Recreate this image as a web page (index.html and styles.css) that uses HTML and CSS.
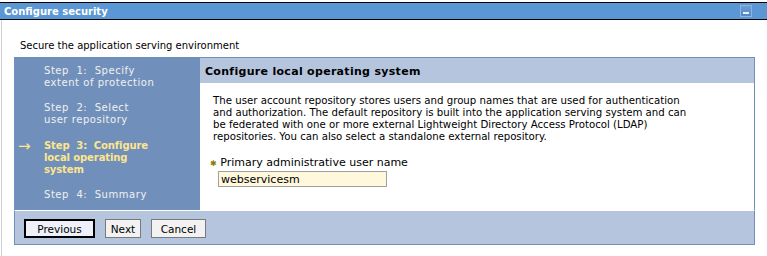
FILE: index.html
```html
<!DOCTYPE html>
<html lang="en">
    <head>
        <meta charset="UTF-8" />
        <title>Configure security</title>
        <link rel="stylesheet" href="styles.css">
    </head>
    <body>
        <!-- Portlet title bar -->
        <div class="titlebar">
            <span class="title">Configure security</span>
            <span class="minimize"><span class="dash"></span></span>
        </div>

        <div class="portlet">
            <p class="subtitle">Secure the application serving environment</p>

            <!-- Wizard -->
            <div class="wizard">
                <div class="wizard-main">
                    <div class="steps">
                        <div class="step">Step&nbsp; 1:&nbsp; Specify<br>extent of protection</div>
                        <div class="step">Step&nbsp; 2:&nbsp; Select<br>user repository</div>
                        <div class="step current">
                            <span class="arrow">&rarr;</span>
                            Step&nbsp; 3:&nbsp; Configure<br>local operating<br>system
                        </div>
                        <div class="step">Step&nbsp; 4:&nbsp; Summary</div>
                    </div>

                    <div class="panel">
                        <div class="panel-head">Configure local operating system</div>
                        <div class="panel-body">
                            <p>
                                The user account repository stores users and group names that are used for authentication<br>
                                and authorization. The default repository is built into the application serving system and can<br>
                                be federated with one or more external Lightweight Directory Access Protocol (LDAP)<br>
                                repositories. You can also select a standalone external repository.
                            </p>
                            <label class="field-label" for="adminUser">
                                <span class="req">&#10033;</span> Primary administrative user name
                            </label>
                            <input id="adminUser" class="field" type="text" value="webservicesm">
                        </div>
                    </div>
                </div>

                <div class="buttons">
                    <button class="default btn-prev">Previous</button>
                    <button class="btn-next">Next</button>
                    <button class="btn-cancel">Cancel</button>
                </div>
            </div>
        </div>
    </body>
</html>
```

FILE: styles.css
```css
html {
    background-color: #ffffff;
}

body {
    margin: 0;
    padding-top: 2px;
    font-family: "DejaVu Sans", Verdana, sans-serif;
    font-size: 10px;
    color: #000000;
}

.titlebar {
    display: flex;
    align-items: center;
    justify-content: space-between;
    height: 16px;
    padding: 0 4px;
    background-color: #5b97d4;
    border-top: 1px solid #000000;
    border-bottom: 1px solid #000000;
}

.title {
    color: #ffffff;
    font-weight: bold;
    font-size: 10px;
}

.minimize {
    display: flex;
    align-items: flex-end;
    justify-content: center;
    width: 12px;
    height: 12px;
    margin-right: 11px;
    background: linear-gradient(#6e9fd6, #4f86c4);
    box-shadow: inset 0 0 0 1px #8fb4de;
}

.dash {
    width: 6px;
    height: 2px;
    margin-bottom: 3px;
    background-color: #e8f0fa;
}

.portlet {
    border-left: 1px solid #d0d0d0;
    margin-left: 1px;
    padding: 20px 12px 12px 12px;
}

.subtitle {
    margin: 0 0 6px 6px;
}

.wizard {
    width: 741px;
}

.wizard-main {
    display: flex;
}

.steps {
    width: 186px;
    flex-shrink: 0;
    padding: 8px 0 9px 0;
    background-color: #7090bb;
    color: #f0f0f0;
}

.step {
    position: relative;
    padding-left: 30px;
    line-height: 12px;
    margin-bottom: 13px;
    letter-spacing: 0.55px;
}

.step:last-child {
    margin-bottom: 0;
}

.step.current {
    margin-top: 14px;
    color: #ffe58c;
    font-weight: bold;
    letter-spacing: -0.1px;
}

.arrow {
    position: absolute;
    left: 4px;
    top: 0;
    font-size: 15px;
    font-weight: normal;
}

.panel {
    flex: 1;
    border-top: 1px solid #7090bb;
    border-right: 1px solid #7090bb;
}

.panel-head {
    height: 23px;
    padding-top: 2px;
    line-height: 23px;
    padding-left: 5px;
    background-color: #b5c5de;
    font-weight: bold;
    font-size: 11px;
    letter-spacing: 0.3px;
}

.panel-body {
    padding: 12px 12px 10px 13px;
}

.panel-body p {
    margin: 0 0 14px 0;
    font-size: 10.2px;
    line-height: 12px;
}

.field-label {
    display: block;
    margin-left: -3px;
    font-size: 11px;
    line-height: 12px;
}

.req {
    font-size: 8px;
    color: #8a7a00;
}

.field {
    display: block;
    width: 169px;
    height: 16px;
    box-sizing: border-box;
    margin: 1px 0 0 5px;
    padding: 0 2px;
    font-family: "DejaVu Sans", Verdana, sans-serif;
    font-size: 11px;
    background-color: #fff8dc;
    border: 1px solid #a0a0a0;
}

.buttons {
    display: flex;
    gap: 10px;
    padding: 8px 9px 6px 9px;
    background-color: #b5c5de;
    border-top: 1px solid #ffffff;
    border-left: 1px solid #7090bb;
    border-bottom: 1px solid #7090bb;
    border-right: 1px solid #7090bb;
}

button {
    height: 19px;
    padding: 0;
    font-family: "DejaVu Sans", Verdana, sans-serif;
    font-size: 10.5px;
    color: #000000;
    background-color: #f2f2f2;
    border: 1px solid #7a7a7a;
}

button.default {
    border: 2px solid #000000;
    background-color: #eef0fa;
}

.btn-prev {
    width: 71px;
}

.btn-next {
    width: 36px;
}

.btn-cancel {
    width: 55px;
}
```
